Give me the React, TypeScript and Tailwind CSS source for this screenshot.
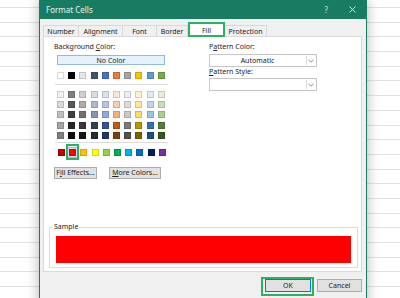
import React from "react";

const font = { fontFamily: '"Noto Sans", "Open Sans", sans-serif' };

const themeTop = ["#ffffff", "#000000", "#e7e6e6", "#44546a", "#4472c4", "#ed7d31", "#a5a5a5", "#ffc000", "#5b9bd5", "#70ad47"];

const tints = [
  ["#f2f2f2", "#7f7f7f", "#d0cece", "#d6dce4", "#d9e2f3", "#fbe5d5", "#ededed", "#fff2cc", "#deebf6", "#e2efd9"],
  ["#d8d8d8", "#595959", "#aeabab", "#adb9ca", "#b4c6e7", "#f7cbac", "#dbdbdb", "#fee599", "#bdd7ee", "#c5e0b3"],
  ["#bfbfbf", "#3f3f3f", "#757070", "#8496b0", "#8eaadb", "#f4b183", "#c9c9c9", "#ffd965", "#9cc3e5", "#a8d08d"],
  ["#a5a5a5", "#262626", "#3a3838", "#323f4f", "#2f5496", "#c55a11", "#7b7b7b", "#bf9000", "#2e75b5", "#538135"],
  ["#7f7f7f", "#0c0c0c", "#171616", "#222a35", "#1f3864", "#833c0b", "#525252", "#7f6000", "#1e4e79", "#375623"],
];

const standard = ["#c00000", "#ff0000", "#ffc000", "#ffff00", "#92d050", "#00b050", "#00b0f0", "#0070c0", "#002060", "#7030a0"];

const tabs = ["Number", "Alignment", "Font", "Border", "Fill", "Protection"];
const tabWidths: Record<string, string> = {
  Number: "w-[36px]",
  Alignment: "w-[44px]",
  Font: "w-[34px]",
  Border: "w-[31px]",
  Fill: "w-[37px]",
  Protection: "w-[42px]",
};

function Swatch({ color }: { color: string }) {
  return <div className="h-[7px] w-[7px] border border-black/15" style={{ backgroundColor: color }} />;
}

function Dropdown({ value }: { value?: string }) {
  return (
    <div className="flex h-[13px] w-[108px] border border-[#c6c6c6] bg-white">
      <div className="flex flex-1 items-center justify-center text-[7px] leading-none text-[#222]">{value}</div>
      <div className="m-px flex w-[9px] items-center justify-center border-l border-[#dcdcdc]">
        <svg width="6" height="4" viewBox="0 0 6 4">
          <path d="M0.5 0.8 L3 3.2 L5.5 0.8" fill="none" stroke="#707070" strokeWidth="0.8" />
        </svg>
      </div>
    </div>
  );
}

function Btn({ children, className = "" }: { children: React.ReactNode; className?: string }) {
  return (
    <div
      className={`flex h-[12px] items-center justify-center border border-[#adadad] bg-[#e1e1e1] text-[7px] leading-none text-[#222] ${className}`}
    >
      {children}
    </div>
  );
}

export default function App() {
  return (
    <div className="relative h-[298px] w-[400px] overflow-hidden bg-white" style={font}>
      {/* sheet behind the dialog */}
      <div className="flex flex-col pt-[7px]">
        {Array.from({ length: 21 }).map((_, i) => (
          <div key={i} className="h-[14.7px] shrink-0 border-t border-[#e3e3e3]" />
        ))}
      </div>

      {/* dialog */}
      <div className="absolute left-[39px] top-0 flex h-[310px] w-[328px] flex-col border border-t-0 border-[#187c62] bg-[#f0f0f0] shadow-[0_0_12px_rgba(0,0,0,0.3)]">
        <div className="flex h-[19px] shrink-0 items-center bg-[#187c62] pl-[6px] pr-[10px] text-white">
          <span className="text-[8px] leading-none text-white/90">Format Cells</span>
          <span className="ml-auto text-[8px] leading-none text-white/80">?</span>
          <svg className="ml-[21px]" width="7" height="7" viewBox="0 0 7 7">
            <path d="M0.5 0.5 L6.5 6.5 M6.5 0.5 L0.5 6.5" stroke="#e6f2ee" strokeWidth="0.9" />
          </svg>
        </div>

        <div className="flex flex-1 flex-col pl-[3px] pr-[4px] pt-[6px]">
          {/* tabs */}
          <div className="flex h-[11px] items-end">
            {tabs.map((t) =>
              t === "Fill" ? (
                <div
                  key={t}
                  className={`relative z-10 -mb-px flex h-[14px] items-center justify-center bg-white text-[7px] leading-none text-[#222] ${tabWidths[t]}`}
                >
                  Fill
                  <div className="absolute -top-[1px] left-0 h-[15px] w-[37px] border-2 border-[#2eb062]" />
                </div>
              ) : (
                <div
                  key={t}
                  className={`flex h-[11px] items-center justify-center border border-b-0 border-l-0 border-[#d9d9d9] bg-[#f0f0f0] text-[7px] leading-none text-[#222] first:border-l ${tabWidths[t]}`}
                >
                  {t}
                </div>
              )
            )}
          </div>

          {/* panel */}
          <div className="flex h-[236px] flex-col border border-[#d9d9d9] bg-white text-[#222]">
            <div className="flex pl-[10px] pt-[5px]">
              {/* left column */}
              <div className="flex w-[155px] flex-col">
                <div className="h-[10px] text-[7px] leading-[10px]">
                  Background <span className="underline">C</span>olor:
                </div>
                <div className="ml-[3px] mt-[3px] flex h-[10px] w-[108px] items-center justify-center border border-[#91b8dd] bg-[#e5f1fb] text-[7px] leading-none">
                  No Color
                </div>
                <div className="ml-[3px] mt-[7px] flex gap-[4.2px]">
                  {themeTop.map((c) => (
                    <Swatch key={c} color={c} />
                  ))}
                </div>
                <div className="ml-[1px] mt-[5px] h-px w-[113px] bg-[#dcdcdc]" />
                <div className="ml-[3px] mt-[6px] flex flex-col gap-[3.2px]">
                  {tints.map((row, r) => (
                    <div key={r} className="flex gap-[4.2px]">
                      {row.map((c, i) => (
                        <Swatch key={i} color={c} />
                      ))}
                    </div>
                  ))}
                </div>
                <div className="ml-[1px] mt-[3px] h-px w-[113px] bg-[#dcdcdc]" />
                <div className="ml-[4px] mt-[6px] flex gap-[4.2px]">
                  {standard.map((c) =>
                    c === "#ff0000" ? (
                      <div key={c} className="relative">
                        <div className="absolute -left-[2px] -top-[2px] h-[11px] w-[11px] border border-[#8cc4ec] bg-[#cce4f7]" />
                        <div className="relative">
                          <Swatch color={c} />
                        </div>
                        <div className="absolute -left-[3px] -top-[5px] h-[16px] w-[13px] border-2 border-[#2eb062]" />
                      </div>
                    ) : (
                      <Swatch key={c} color={c} />
                    )
                  )}
                </div>
                <div className="mt-[11px] flex gap-[12px]">
                  <Btn className="w-[43px]">
                    F<span className="underline">i</span>ll Effects...
                  </Btn>
                  <Btn className="w-[52px]">
                    <span className="underline">M</span>ore Colors...
                  </Btn>
                </div>
              </div>

              {/* right column */}
              <div className="flex w-[108px] flex-col">
                <div className="h-[10px] text-[7px] leading-[10px]">
                  P<span className="underline">a</span>ttern Color:
                </div>
                <div className="mt-[2px]">
                  <Dropdown value="Automatic" />
                </div>
                <div className="h-[10px] text-[7px] leading-[10px]">
                  <span className="underline">P</span>attern Style:
                </div>
                <div className="mt-px">
                  <Dropdown />
                </div>
              </div>
            </div>

            <div className="flex-1" />

            {/* sample */}
            <div className="relative mb-[3px] ml-[5px] h-[41px] w-[309px] border border-[#dcdcdc]">
              <span className="absolute -top-[6px] left-[3px] bg-white px-px text-[7px] leading-[10px]">Sample</span>
              <div className="ml-[6px] mt-[8px] h-[27px] w-[295px] bg-[#ff0000]" />
            </div>
          </div>

          {/* buttons */}
          <div className="mt-[7px] flex justify-end gap-[6px]">
            <div className="relative">
              <div className="flex h-[13px] w-[46px] items-center justify-center border border-[#0078d7] bg-[#e1e1e1] text-[7px] leading-none text-[#222]">
                OK
              </div>
              <div className="absolute -left-[4px] -top-[2px] h-[19px] w-[53px] border-2 border-[#2eb062]" />
            </div>
            <div className="flex h-[13px] w-[45px] items-center justify-center border border-[#adadad] bg-[#e1e1e1] text-[7px] leading-none text-[#222]">
              Cancel
            </div>
          </div>
        </div>
      </div>
    </div>
  );
}
